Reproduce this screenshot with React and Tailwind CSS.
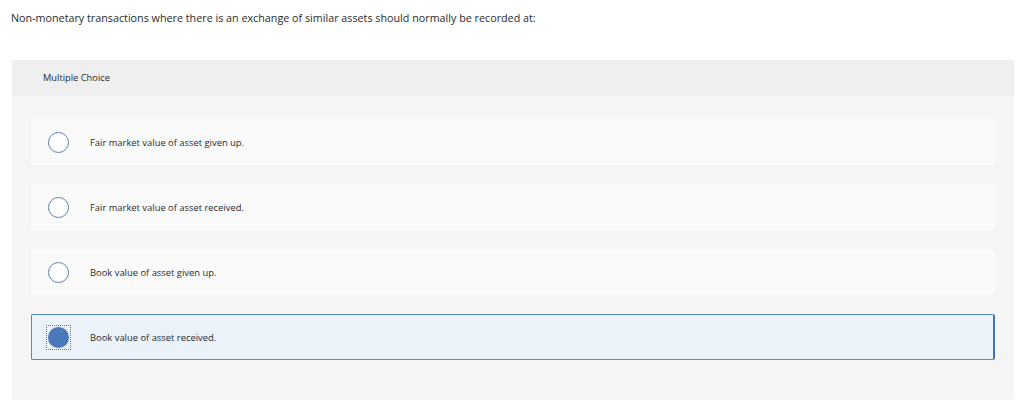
const options = [
  "Fair market value of asset given up.",
  "Fair market value of asset received.",
  "Book value of asset given up.",
  "Book value of asset received.",
];

function Radio({ checked }) {
  if (checked) {
    return (
      <div className="w-[25px] h-[25px] shrink-0 border border-dotted border-[#4a7bc0] flex items-center justify-center">
        <div className="w-[21px] h-[21px] rounded-full bg-[#4a78b8]" />
      </div>
    );
  }
  return (
    <div className="w-[25px] h-[25px] shrink-0 flex items-center justify-center">
      <div className="w-[21px] h-[21px] rounded-full border border-[#5b7fae] bg-white" />
    </div>
  );
}

export default function App() {
  const selected = 3;
  return (
    <div
      className="w-[1024px] h-[417px] bg-white text-[#2a2a2a]"
      style={{ fontFamily: "'Open Sans', sans-serif" }}
    >
      <p className="pl-[11px] pt-[11px] text-[10.75px] leading-[14px]">
        Non-monetary transactions where there is an exchange of similar assets should normally be recorded at:
      </p>
      <div className="mt-[35px] ml-[12px] w-[1002px] h-[340px] bg-[#f5f5f5] rounded-[3px]">
        <div className="h-[36px] bg-[#efefef] flex items-center pl-[31px] text-[9.3px]">
          Multiple Choice
        </div>
        <div className="flex flex-col gap-[19px] pt-[23px] pl-[19px] pr-[19px]">
          {options.map((o, i) => (
            <div
              key={o}
              className={
                i === selected
                  ? "h-[46px] flex items-center pl-[14px] gap-[19px] bg-[#ebf2fa] border border-[#5a87c5] border-r-2 border-r-[#3f74ba] rounded-[2px]"
                  : "h-[46px] flex items-center pl-[15px] gap-[19px] bg-[#fafafa] rounded-[2px]"
              }
            >
              <Radio checked={i === selected} />
              <span className="text-[9.4px] mt-[2px]">{o}</span>
            </div>
          ))}
        </div>
      </div>
    </div>
  );
}
